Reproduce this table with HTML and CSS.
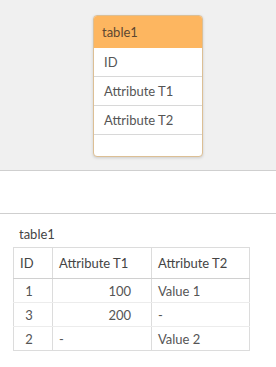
FILE: index.html
```html
<!DOCTYPE html>
<html>
<head>
<meta charset="utf-8">
<link rel="stylesheet" href="styles.css">
</head>
<body>
<div class="canvas">
  <div class="entity">
    <div class="entity-head">table1</div>
    <div class="entity-row">ID</div>
    <div class="entity-row">Attribute T1</div>
    <div class="entity-row">Attribute T2</div>
    <div class="entity-row empty"></div>
  </div>
</div>
<div class="spacer"></div>
<div class="result">
  <div class="result-title">table1</div>
  <table class="grid">
    <thead>
      <tr><th class="c-id">ID</th><th class="c-t1">Attribute T1</th><th class="c-t2">Attribute T2</th></tr>
    </thead>
    <tbody>
      <tr><td class="c-id center">1</td><td class="c-t1 num">100</td><td class="c-t2">Value 1</td></tr>
      <tr><td class="c-id center">3</td><td class="c-t1 num">200</td><td class="c-t2">-</td></tr>
      <tr><td class="c-id center">2</td><td class="c-t1">-</td><td class="c-t2">Value 2</td></tr>
    </tbody>
  </table>
</div>
</body>
</html>
```
FILE: styles.css
```css
* { box-sizing: border-box; }
html, body { margin: 0; padding: 0; background: #fff; }
body {
  font-family: "Lato", "Open Sans", sans-serif;
  font-size: 13px;
  color: #444;
  width: 276px;
}
.canvas {
  height: 171px;
  background: #f0f0f0;
  border-bottom: 1px solid #cfcfcf;
  padding: 15px 0 0 93px;
}
.entity {
  width: 110px;
  background: #fff;
  border: 1px solid #dcbf95;
  border-radius: 4px;
  overflow: hidden;
  box-shadow: 0 1px 3px rgba(0,0,0,0.15);
}
.entity-head {
  height: 32px;
  background: #fdb660;
  color: #5c4630;
  padding: 0 8px;
  line-height: 32px;
}
.entity-row {
  height: 29px;
  line-height: 28px;
  padding: 0 10px;
  border-bottom: 1px solid #d8d8d8;
  color: #555;
}
.entity-row.empty { height: 21px; border-bottom: none; }
.spacer {
  height: 43px;
  border-bottom: 1px solid #cfcfcf;
}
.result { padding: 12px 0 0 13px; }
.result-title {
  height: 21px;
  line-height: 16px;
  padding-left: 6px;
  color: #444;
}
.grid {
  border-collapse: collapse;
  border: 1px solid #dcdcdc;
}
.grid th {
  font-weight: normal;
  text-align: left;
  height: 31px;
  padding: 0 6px;
  border-left: 1px solid #dcdcdc;
  border-bottom: 1px solid #d0d0d0;
  color: #444;
}
.grid td {
  height: 24px;
  padding: 0 6px;
  border-left: 1px solid #dcdcdc;
  border-bottom: 1px solid #ececec;
  color: #555;
}
.grid tbody tr:last-child td { border-bottom: 1px solid #dcdcdc; }
.c-id { width: 39px; }
.c-t1 { width: 99px; }
.c-t2 { width: 98px; }
.center { text-align: center; padding-right: 14px !important; }
.num { text-align: right; padding-right: 20px !important; }
```
